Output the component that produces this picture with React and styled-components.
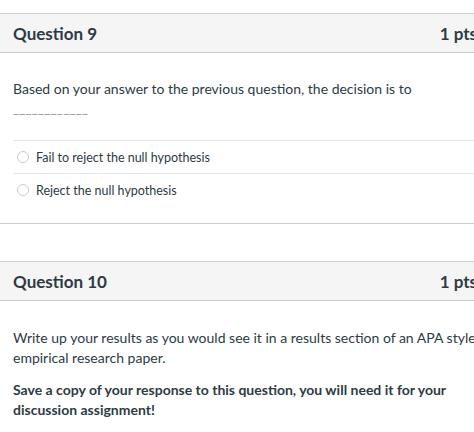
import React from "react";
import styled, { createGlobalStyle } from "styled-components";

const Global = createGlobalStyle`
  html, body { margin: 0; padding: 0; background: #fff; overflow: hidden; }
  body { font-family: Lato, "Open Sans", sans-serif; color: #2d3b45; }
`;

const Page = styled.div`
  width: 490px;
  padding-top: 13px;
  display: flex;
  flex-direction: column;
  gap: 37px;
`;

const Panel = styled.section`
  border-top: 1px solid #c7cdd1;
  border-bottom: 1px solid #c7cdd1;
`;

const Header = styled.header`
  height: 38px;
  background: #f5f5f5;
  border-bottom: 1px solid #c7cdd1;
  display: flex;
  align-items: center;
  justify-content: space-between;
  padding: 0 13px 0 13px;
`;

const Title = styled.h2`
  margin: 0;
  font-size: 17px;
  font-weight: 700;
`;

const Points = styled.span`
  font-size: 17px;
  font-weight: 700;
  color: #2d3b45;
`;

const Body = styled.div`
  padding: ${(p) => p.$top}px 13px ${(p) => p.$bottom}px 13px;
`;

const Text = styled.p`
  margin: 0 0 ${(p) => p.$gap || 0}px;
  font-size: 14px;
  line-height: 20px;
  font-weight: ${(p) => (p.$bold ? 700 : 400)};
`;

const Blank = styled.div`
  margin-top: -1px;
  font-size: 13px;
  line-height: 20px;
  color: #8b969e;
  letter-spacing: 0.3px;
`;

const Options = styled.ul`
  list-style: none;
  margin: 22px 0 0;
  padding: 0;
  border-top: 1px solid #e4e7ea;
`;

const Option = styled.li`
  height: 32px;
  display: flex;
  align-items: center;
  gap: 7px;
  padding-left: 4px;
  font-size: 12.5px;
  border-top: ${(p) => (p.$first ? "none" : "1px solid #e4e7ea")};
`;

const Radio = styled.span`
  width: 10px;
  height: 10px;
  border-radius: 50%;
  border: 1px solid #c7cdd1;
  background: #fff;
  flex: none;
`;

export default function App() {
  return (
    <>
      <Global />
      <Page>
        <Panel>
          <Header>
            <Title>Question 9</Title>
            <Points>1 pts</Points>
          </Header>
          <Body $top={26} $bottom={17}>
            <Text>Based on your answer to the previous question, the decision is to</Text>
            <Blank>____________</Blank>
            <Options>
              <Option $first>
                <Radio />
                Fail to reject the null hypothesis
              </Option>
              <Option>
                <Radio />
                Reject the null hypothesis
              </Option>
            </Options>
          </Body>
        </Panel>
        <Panel>
          <Header>
            <Title>Question 10</Title>
            <Points>1 pts</Points>
          </Header>
          <Body $top={27} $bottom={20}>
            <Text $gap={12}>
              Write up your results as you would see it in a results section of an APA style
              empirical research paper.
            </Text>
            <Text $bold>
              Save a copy of your response to this question, you will need it for your
              discussion assignment!
            </Text>
          </Body>
        </Panel>
      </Page>
    </>
  );
}
